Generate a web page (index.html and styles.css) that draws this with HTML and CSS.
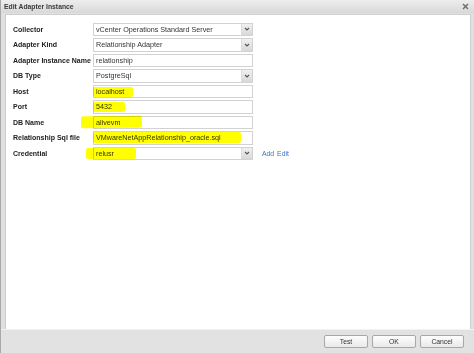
FILE: index.html
```html
<!DOCTYPE html>
<html>
<head>
<meta charset="utf-8">
<link rel="stylesheet" href="styles.css">
</head>
<body>
<div class="dialog">
  <div class="titlebar">
    <span class="title">Edit Adapter Instance</span>
    <span class="close"><svg width="7" height="7" viewBox="0 0 7 7"><path d="M1 1 L6 6 M6 1 L1 6" stroke="#6a6a6a" stroke-width="1.4"/></svg></span>
  </div>
  <div class="main">
    <div class="content">
      <div class="row">
        <div class="label">Collector</div>
        <div class="field"><div class="box select"><span class="val">vCenter Operations Standard Server</span><span class="arrow"><svg width="6" height="4" viewBox="0 0 6 4"><path d="M1 1 L3 3 L5 1" stroke="#555" stroke-width="1.1" fill="none"/></svg></span></div></div>
      </div>
      <div class="row">
        <div class="label">Adapter Kind</div>
        <div class="field"><div class="box select"><span class="val">Relationship Adapter</span><span class="arrow"><svg width="6" height="4" viewBox="0 0 6 4"><path d="M1 1 L3 3 L5 1" stroke="#555" stroke-width="1.1" fill="none"/></svg></span></div></div>
      </div>
      <div class="row">
        <div class="label">Adapter Instance Name</div>
        <div class="field"><div class="box"><span class="val">relationship</span></div></div>
      </div>
      <div class="row">
        <div class="label">DB Type</div>
        <div class="field"><div class="box select"><span class="val">PostgreSql</span><span class="arrow"><svg width="6" height="4" viewBox="0 0 6 4"><path d="M1 1 L3 3 L5 1" stroke="#555" stroke-width="1.1" fill="none"/></svg></span></div></div>
      </div>
      <div class="row">
        <div class="label">Host</div>
        <div class="field"><div class="box"><span class="val">localhost</span></div><span class="hl hl-host"></span></div>
      </div>
      <div class="row">
        <div class="label">Port</div>
        <div class="field"><div class="box"><span class="val">5432</span></div><span class="hl hl-port"></span></div>
      </div>
      <div class="row">
        <div class="label">DB Name</div>
        <div class="field"><div class="box"><span class="val">alivevm</span></div><span class="hl hl-db"></span></div>
      </div>
      <div class="row">
        <div class="label">Relationship Sql file</div>
        <div class="field"><div class="box"><span class="val">VMwareNetAppRelationship_oracle.sql</span></div><span class="hl hl-sql"></span></div>
      </div>
      <div class="row">
        <div class="label">Credential</div>
        <div class="field"><div class="box select"><span class="val">relusr</span><span class="arrow"><svg width="6" height="4" viewBox="0 0 6 4"><path d="M1 1 L3 3 L5 1" stroke="#555" stroke-width="1.1" fill="none"/></svg></span></div><span class="hl hl-cred"></span></div>
        <div class="links"><span class="link">Add</span><span class="link">Edit</span></div>
      </div>
    </div>
  </div>
  <div class="footer">
    <span class="btn">Test</span>
    <span class="btn">OK</span>
    <span class="btn">Cancel</span>
  </div>
</div>
</body>
</html>
```
FILE: styles.css
```css
html, body {
  margin: 0;
  padding: 0;
}
body {
  width: 474px;
  height: 353px;
  overflow: hidden;
  background: #e3e3e3;
  font-family: "Liberation Sans", Arial, sans-serif;
}
.dialog {
  height: 353px;
  display: flex;
  flex-direction: column;
  border-left: 1px solid #a9a9a9;
  box-sizing: border-box;
}
.titlebar {
  height: 13px;
  flex: none;
  display: flex;
  align-items: center;
  justify-content: space-between;
  padding: 0 5px 0 3px;
  background: linear-gradient(#ededed, #d9d9d9);
}
.title {
  font-size: 6.8px;
  font-weight: bold;
  color: #3a3a3a;
}
.close {
  display: flex;
  width: 7px;
  height: 7px;
  margin-top: -1px;
}
.main {
  flex: 1;
  display: flex;
  padding: 1px 3px 0 4px;
  background: #e0e0e0;
}
.content {
  flex: 1;
  background: #fff;
  border: 1px solid #cfcfcf;
  border-bottom: none;
  padding: 7.5px 0 0 7px;
}
.row {
  display: flex;
  align-items: center;
  height: 13.5px;
  margin-bottom: 2px;
}
.label {
  width: 80px;
  flex: none;
  font-size: 7px;
  font-weight: bold;
  color: #222;
  white-space: nowrap;
}
.field {
  position: relative;
  width: 160px;
  height: 13.5px;
  flex: none;
}
.box {
  box-sizing: border-box;
  height: 13.5px;
  border: 1px solid #d2d2d2;
  background: #fff;
  display: flex;
  align-items: center;
  font-size: 7.2px;
  color: #333;
}
.val {
  flex: 1;
  padding-left: 2px;
  white-space: nowrap;
  overflow: hidden;
}
.select .arrow {
  width: 10px;
  height: 100%;
  flex: none;
  display: flex;
  align-items: center;
  justify-content: center;
  background: linear-gradient(#f0f0f0, #d8d8d8);
  border-left: 1px solid #dcdcdc;
}
.hl {
  position: absolute;
  background: #ffff00;
  mix-blend-mode: multiply;
  border-radius: 2px;
}
.hl-host { left: 0; top: 2.5px; width: 40px; height: 10px; }
.hl-port { left: 0; top: 2px; width: 32px; height: 10px; }
.hl-db { left: -12px; top: 0.5px; width: 61px; height: 11.5px; transform: rotate(-0.6deg); }
.hl-sql { left: 0; top: 0.5px; width: 148px; height: 11.5px; }
.hl-cred { left: -7px; top: 1.5px; width: 50px; height: 11px; }
.links {
  display: flex;
  gap: 3px;
  margin-left: 9px;
  font-size: 6.8px;
}
.link {
  color: #3d6fc4;
}
.footer {
  height: 24px;
  flex: none;
  box-sizing: border-box;
  border-top: 1px solid #f2f2f2;
  background: #e2e2e2;
  display: flex;
  justify-content: flex-end;
  gap: 4px;
  padding: 5px 10px 0 0;
}
.btn {
  box-sizing: border-box;
  width: 44px;
  height: 12.5px;
  border: 1px solid #a8a8a8;
  border-radius: 2px;
  background: linear-gradient(#fdfdfd, #e9e9e9);
  font-size: 6.8px;
  color: #333;
  display: flex;
  align-items: center;
  justify-content: center;
}
```
